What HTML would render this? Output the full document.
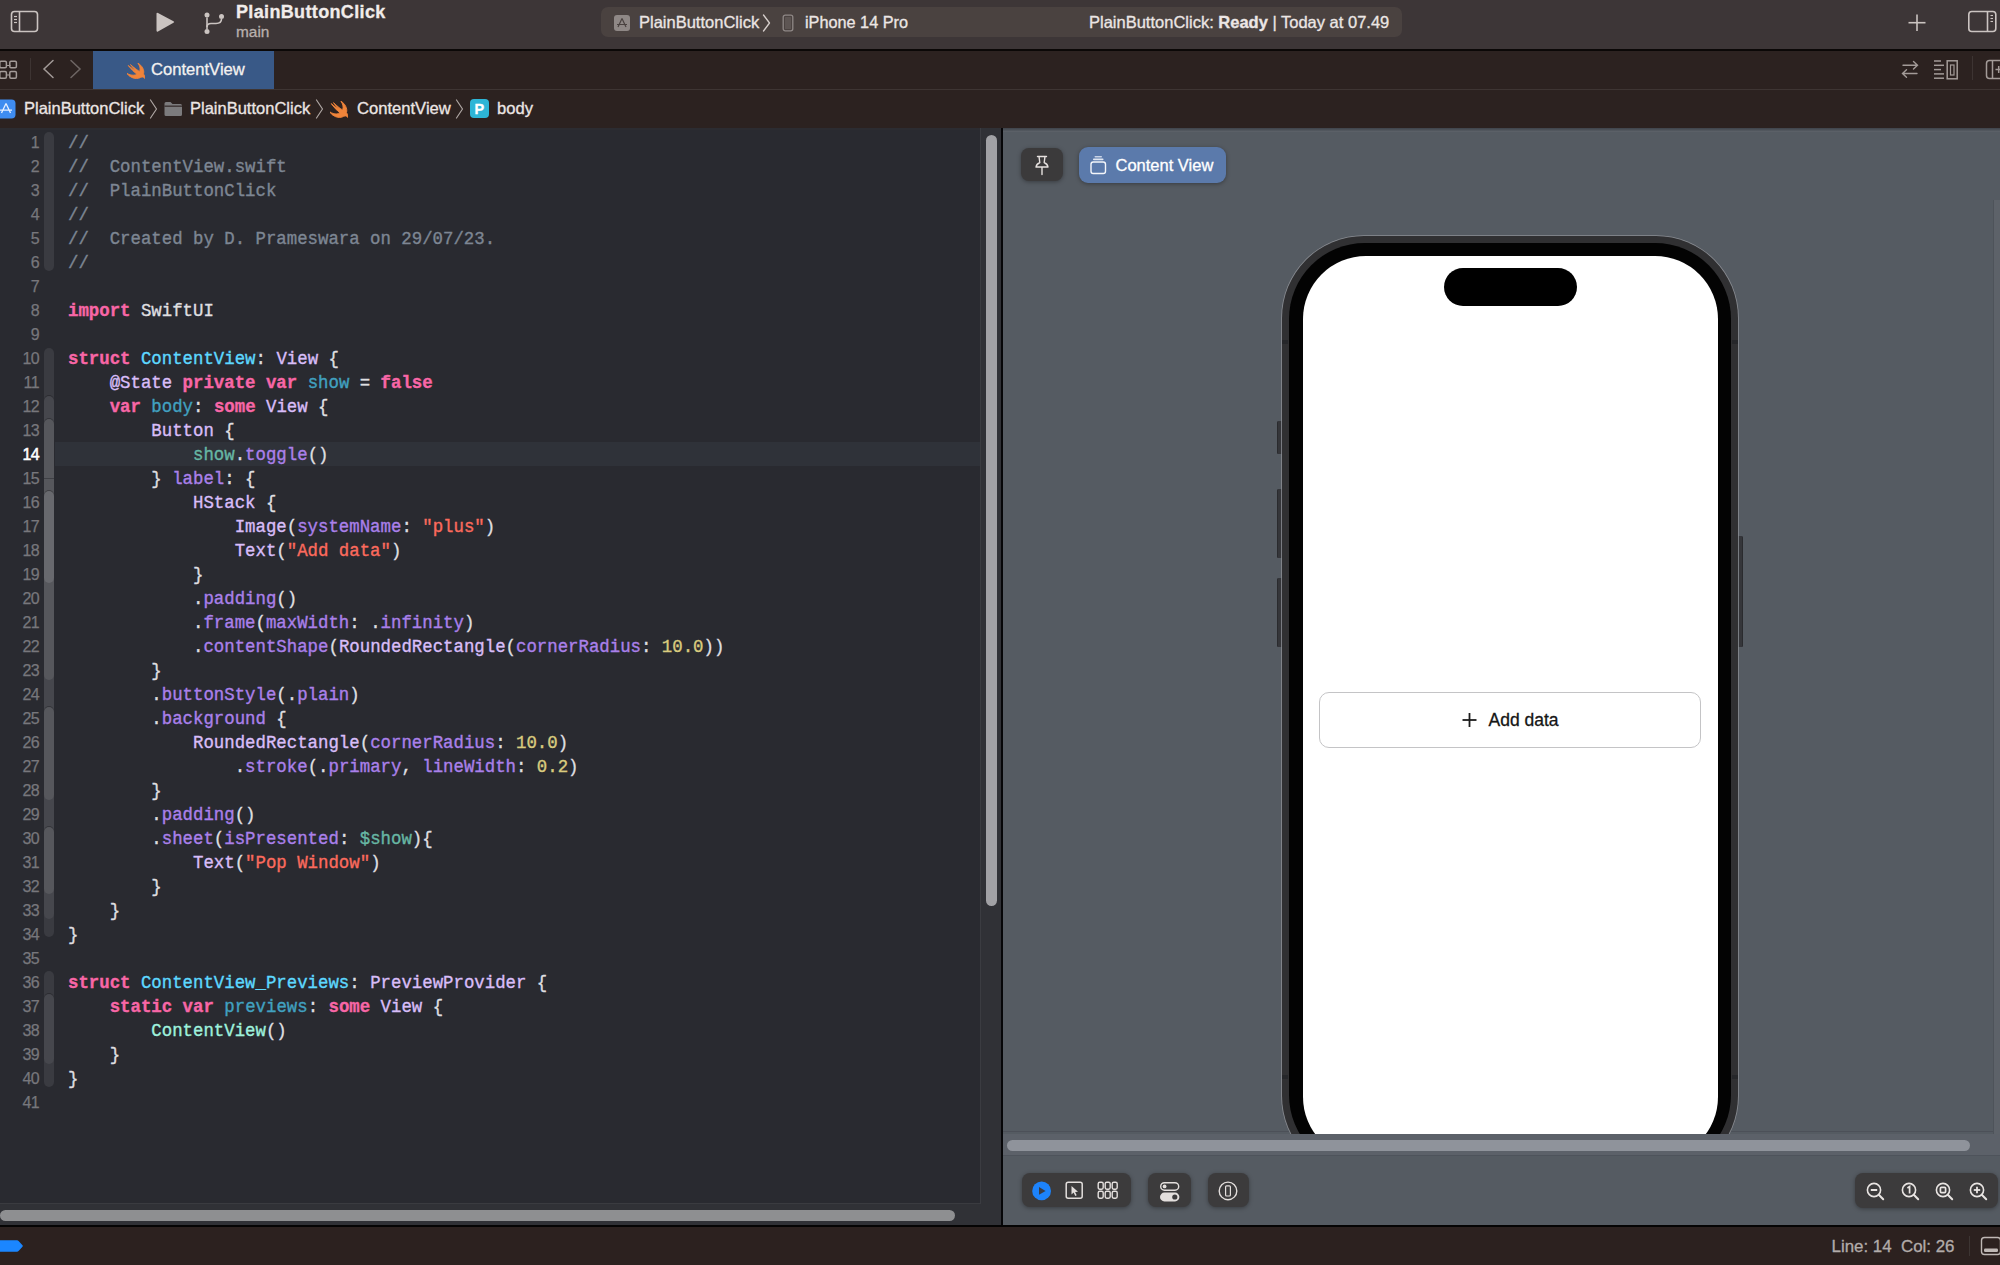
<!DOCTYPE html>
<html><head><meta charset="utf-8">
<style>
*{margin:0;padding:0;box-sizing:border-box}
html,body{width:2000px;height:1265px;overflow:hidden;background:#2c2220;font-family:"Liberation Sans",sans-serif}
.a{position:absolute}
#toolbar{left:0;top:0;width:2000px;height:49px;background:#3d3637}
#tbline{left:0;top:49px;width:2000px;height:2px;background:#0b0807}
#tabbar{left:0;top:51px;width:2000px;height:38px;background:#2c2220}
#tabsep{left:0;top:89px;width:2000px;height:1px;background:#3e3533}
#crumb{left:0;top:90px;width:2000px;height:38px;background:#2c2220}
#editor{left:0;top:128px;width:1001px;height:1098px;background:#292a30;overflow:hidden}
#divider{left:1001px;top:128px;width:2px;height:1098px;background:#060608}
#canvas{left:1003px;top:128px;width:997px;height:1098px;background:#555b62;overflow:hidden}
#statline{left:0;top:1225px;width:2000px;height:2px;background:#050404}
#status{left:0;top:1227px;width:2000px;height:38px;background:#2c211f}
.ui{color:#ece6e4;font-size:16.5px;white-space:pre;line-height:20px}
.code{font-family:"Liberation Mono",monospace;font-size:17.38px;line-height:24px;white-space:pre;color:#dfdfe0;transform-origin:0 16.6px;transform:scaleY(1.05);-webkit-text-stroke:0.35px currentColor}
.ln{font-family:"Liberation Sans",sans-serif;font-size:16px;color:#77777c;text-align:right;width:40px;line-height:24px;letter-spacing:-0.6px;-webkit-text-stroke:0.25px #77777c}
.k{color:#f866a6;font-weight:bold}
.c{color:#7d8693}
.td{color:#5dd8ff}
.od{color:#41a1c0}
.st{color:#d8bdf8}
.sf{color:#aa80ea}
.pp{color:#67b7a4}
.pt{color:#9ef1dd}
.s{color:#fc6a5d}
.n{color:#d9cb7e}
</style></head><body>
<body>
<div id="toolbar" class="a"></div><div id="tbline" class="a"></div><div id="tabbar" class="a"></div><div id="tabsep" class="a"></div><div id="crumb" class="a"></div>
<svg class="a" style="left:10px;top:10px;" width="30" height="24" viewBox="0 0 30 24"><rect x="1.5" y="1.5" width="26" height="20" rx="3" fill="none" stroke="#cbc4c1" stroke-width="1.6"/><line x1="9.5" y1="2" x2="9.5" y2="21" stroke="#cbc4c1" stroke-width="1.6"/><line x1="4" y1="6.5" x2="7" y2="6.5" stroke="#cbc4c1" stroke-width="1.2"/><line x1="4" y1="9.5" x2="7" y2="9.5" stroke="#cbc4c1" stroke-width="1.2"/><line x1="4" y1="12.5" x2="7" y2="12.5" stroke="#cbc4c1" stroke-width="1.2"/></svg>
<svg class="a" style="left:154px;top:11px;" width="24" height="24" viewBox="0 0 24 24"><path d="M2.5 2.8 Q2.5 1.2 4 2 L19.5 10.2 Q21 11 19.5 11.8 L4 20.4 Q2.5 21.2 2.5 19.6 Z" fill="#cbc4c1"/></svg>
<svg class="a" style="left:202px;top:11px;" width="26" height="26" viewBox="0 0 26 26"><circle cx="5" cy="4" r="2.5" fill="#cbc4c1"/><circle cx="5" cy="20.5" r="2.5" fill="#cbc4c1"/><circle cx="19.5" cy="5.5" r="2.5" fill="#cbc4c1"/><line x1="5" y1="6.6" x2="5" y2="17.9" stroke="#cbc4c1" stroke-width="1.6"/><path d="M19.5 8.1 Q19.5 12.5 14 12.5 L9 12.5 Q5 12.5 5 16" fill="none" stroke="#cbc4c1" stroke-width="1.6"/></svg>
<div class="a" style="left:236px;top:2.76px;font-family:'Liberation Sans';font-size:18px;line-height:18px;font-weight:700;color:#f1ecea;white-space:pre;-webkit-text-stroke:0.3px #f1ecea;letter-spacing:0.35px;">PlainButtonClick</div>
<div class="a" style="left:236px;top:24.46px;font-family:'Liberation Sans';font-size:15.4px;line-height:15.4px;font-weight:400;color:#b8b0ad;white-space:pre;-webkit-text-stroke:0.3px #b8b0ad;">main</div>
<div class="a" style="left:601px;top:7px;width:801px;height:30px;background:#4a4240;border-radius:7px;"></div>
<div class="a" style="left:614px;top:15px;width:16px;height:16px;background:#8f8886;border-radius:3px;"></div>
<svg class="a" style="left:614px;top:15px;" width="16" height="16" viewBox="0 0 16 16"><path d="M8 3.5 L4 12 M8 3.5 L12 12 M3 9.5 L13 9.5" stroke="#4a4240" stroke-width="1.2" fill="none"/></svg>
<div class="a" style="left:639px;top:14.03px;font-family:'Liberation Sans';font-size:16.5px;line-height:16.5px;font-weight:400;color:#ece6e4;white-space:pre;-webkit-text-stroke:0.3px #ece6e4;">PlainButtonClick</div>
<svg class="a" style="left:762px;top:14px;" width="9" height="18" viewBox="0 0 9 18"><path d="M1.5 1 L7.5 9.0 L1.5 17" fill="none" stroke="#d6cfcc" stroke-width="1.3" stroke-linecap="round" stroke-linejoin="round"/></svg>
<svg class="a" style="left:782px;top:14px;" width="12" height="18" viewBox="0 0 12 18"><rect x="1.2" y="1.2" width="9.6" height="15.6" rx="2" fill="none" stroke="#8f8886" stroke-width="1.3"/><rect x="3" y="3" width="6" height="12" rx="0.5" fill="#5d5553"/></svg>
<div class="a" style="left:805px;top:14.24px;font-family:'Liberation Sans';font-size:16.25px;line-height:16.25px;font-weight:400;color:#ece6e4;white-space:pre;-webkit-text-stroke:0.3px #ece6e4;">iPhone 14 Pro</div>
<div class="a" style="left:1089px;top:14.03px;font-family:'Liberation Sans';font-size:16.5px;line-height:16.5px;font-weight:400;color:#ece6e4;white-space:pre;-webkit-text-stroke:0.3px #ece6e4;">PlainButtonClick: <b>Ready</b> | Today at 07.49</div>
<svg class="a" style="left:1906px;top:12px;" width="22" height="22" viewBox="0 0 22 22"><line x1="11" y1="2.5" x2="11" y2="19" stroke="#cbc4c1" stroke-width="1.6"/><line x1="2.5" y1="10.7" x2="19.5" y2="10.7" stroke="#cbc4c1" stroke-width="1.6"/></svg>
<svg class="a" style="left:1967px;top:10px;" width="32" height="24" viewBox="0 0 32 24"><rect x="1.8" y="1.5" width="27" height="20" rx="3" fill="none" stroke="#cbc4c1" stroke-width="1.6"/><line x1="20.5" y1="2" x2="20.5" y2="21" stroke="#cbc4c1" stroke-width="1.6"/><line x1="23.5" y1="5.5" x2="26" y2="5.5" stroke="#cbc4c1" stroke-width="1.1"/><line x1="23.5" y1="8.5" x2="26" y2="8.5" stroke="#cbc4c1" stroke-width="1.1"/><line x1="23.5" y1="11.5" x2="26" y2="11.5" stroke="#cbc4c1" stroke-width="1.1"/></svg>
<svg class="a" style="left:-2px;top:58px;" width="22" height="24" viewBox="0 0 22 24"><rect x="1.8" y="3.2" width="6.6" height="6.6" rx="1.2" fill="none" stroke="#a39b98" stroke-width="1.5"/><rect x="11.8" y="3.2" width="6.6" height="6.6" rx="1.2" fill="none" stroke="#a39b98" stroke-width="1.5"/><rect x="1.8" y="13.6" width="6.6" height="6.6" rx="1.2" fill="none" stroke="#a39b98" stroke-width="1.5"/><rect x="11.8" y="13.6" width="6.6" height="6.6" rx="1.2" fill="none" stroke="#a39b98" stroke-width="1.5"/><line x1="8.4" y1="7.5" x2="12.5" y2="7.5" stroke="#a39b98" stroke-width="1"/><line x1="8.4" y1="17" x2="12" y2="17" stroke="#a39b98" stroke-width="1"/></svg>
<div class="a" style="left:30px;top:58px;width:1px;height:22px;background:#3d3432;border-radius:0px;"></div>
<svg class="a" style="left:40px;top:58px;" width="18" height="24" viewBox="0 0 18 24"><path d="M13 2.5 L4 11 L13 19.5" fill="none" stroke="#a39b98" stroke-width="1.5" stroke-linecap="round"/></svg>
<svg class="a" style="left:66px;top:58px;" width="18" height="24" viewBox="0 0 18 24"><path d="M5 2.5 L14 11 L5 19.5" fill="none" stroke="#6e6664" stroke-width="1.5" stroke-linecap="round"/></svg>
<div class="a" style="left:93px;top:51px;width:181px;height:38px;background:#395987;border-radius:0px;"></div>
<svg class="a" style="left:126.5px;top:62.5px;" width="18" height="16" viewBox="2.9 3.2 17.6 16.9" preserveAspectRatio="none"><path d="M13.543 3.41c4.114 2.47 6.545 7.162 5.549 11.131-.024.093-.05.181-.076.272l.002.001c2.062 2.538 1.5 5.258 1.236 4.745-1.072-2.086-3.066-1.568-4.088-1.043a6.803 6.803 0 0 1-.281.158l-.02.012-.002.002c-2.115 1.123-4.957 1.205-7.812-.022a12.568 12.568 0 0 1-5.64-4.838c.649.48 1.35.902 2.097 1.252 3.019 1.414 6.051 1.311 8.197-.002C9.651 12.73 7.101 9.670 5.146 7.191a10.628 10.628 0 0 1-1.005-1.384c2.34 2.142 6.038 4.83 7.365 5.576C8.690 8.408 6.208 4.743 6.324 4.860c4.436 4.470 8.528 6.996 8.528 6.996.154.085.27.154.36.213.085-.215.16-.437.224-.668.708-2.588-.09-5.548-1.893-7.992z" fill="#f0843a" stroke="#f0843a" stroke-width="0.9" stroke-linejoin="round"/></svg>
<div class="a" style="left:151px;top:62.45px;font-family:'Liberation Sans';font-size:16.6px;line-height:16.6px;font-weight:400;color:#f3f1f0;white-space:pre;-webkit-text-stroke:0.3px #f3f1f0;">ContentView</div>
<svg class="a" style="left:1899px;top:58px;" width="22" height="24" viewBox="0 0 22 24"><path d="M4 7.3 L18 7.3 M14.5 3.5 L18.5 7.3 L14.5 11.1" fill="none" stroke="#a39b98" stroke-width="1.4" stroke-linecap="round"/><path d="M18 15.5 L4 15.5 M7.5 11.7 L3.5 15.5 L7.5 19.3" fill="none" stroke="#a39b98" stroke-width="1.4" stroke-linecap="round"/></svg>
<svg class="a" style="left:1932px;top:58px;" width="30" height="24" viewBox="0 0 30 24"><line x1="2" y1="3" x2="9" y2="3" stroke="#a39b98" stroke-width="1.5"/><line x1="2" y1="7.3" x2="12" y2="7.3" stroke="#a39b98" stroke-width="1.5"/><line x1="2" y1="11.6" x2="9" y2="11.6" stroke="#a39b98" stroke-width="1.5"/><line x1="2" y1="15.9" x2="12" y2="15.9" stroke="#a39b98" stroke-width="1.5"/><line x1="2" y1="20.2" x2="12" y2="20.2" stroke="#a39b98" stroke-width="1.5"/><rect x="15.2" y="2.8" width="10" height="18" fill="none" stroke="#a39b98" stroke-width="1.5"/><rect x="18.5" y="7" width="3.5" height="10" fill="none" stroke="#a39b98" stroke-width="1.2"/></svg>
<div class="a" style="left:1972px;top:56px;width:1px;height:24px;background:#3d3432;border-radius:0px;"></div>
<svg class="a" style="left:1985px;top:58px;" width="20" height="24" viewBox="0 0 20 24"><rect x="1.5" y="2.5" width="20" height="18" rx="3" fill="none" stroke="#a39b98" stroke-width="1.5"/><line x1="7.5" y1="3" x2="7.5" y2="20" stroke="#a39b98" stroke-width="1.5"/><line x1="10.5" y1="11.5" x2="17" y2="11.5" stroke="#a39b98" stroke-width="1.5"/><line x1="13.7" y1="8" x2="13.7" y2="15" stroke="#a39b98" stroke-width="1.5"/></svg>
<svg class="a" style="left:-4px;top:99px;" width="21" height="20" viewBox="0 0 21 20"><rect x="0.5" y="0.5" width="19" height="19" rx="4" fill="#3f8cf0"/><path d="M10 4.5 L5.5 14 M10 4.5 L14.5 14 M4 11.2 L16 11.2" stroke="#e8f0ff" stroke-width="1.3" fill="none"/></svg>
<div class="a" style="left:24px;top:100.33px;font-family:'Liberation Sans';font-size:16.5px;line-height:16.5px;font-weight:400;color:#ece6e4;white-space:pre;-webkit-text-stroke:0.3px #ece6e4;">PlainButtonClick</div>
<svg class="a" style="left:149px;top:99px;" width="9" height="20" viewBox="0 0 9 20"><path d="M1.5 1 L7.5 10.0 L1.5 19" fill="none" stroke="#aea6a3" stroke-width="1.2" stroke-linecap="round" stroke-linejoin="round"/></svg>
<svg class="a" style="left:164px;top:101px;" width="19" height="16" viewBox="0 0 19 16"><path d="M0.5 2.5 Q0.5 1 2 1 L6.5 1 L8.5 3 L16.5 3 Q18 3 18 4.5 L18 13.5 Q18 15 16.5 15 L2 15 Q0.5 15 0.5 13.5 Z" fill="#7c7b7d"/><rect x="0.5" y="4.6" width="17.5" height="1.1" fill="#2c2220"/></svg>
<div class="a" style="left:190px;top:100.33px;font-family:'Liberation Sans';font-size:16.5px;line-height:16.5px;font-weight:400;color:#ece6e4;white-space:pre;-webkit-text-stroke:0.3px #ece6e4;">PlainButtonClick</div>
<svg class="a" style="left:315px;top:99px;" width="9" height="20" viewBox="0 0 9 20"><path d="M1.5 1 L7.5 10.0 L1.5 19" fill="none" stroke="#aea6a3" stroke-width="1.2" stroke-linecap="round" stroke-linejoin="round"/></svg>
<svg class="a" style="left:330px;top:101px;" width="18" height="17" viewBox="2.9 3.2 17.6 16.9" preserveAspectRatio="none"><path d="M13.543 3.41c4.114 2.47 6.545 7.162 5.549 11.131-.024.093-.05.181-.076.272l.002.001c2.062 2.538 1.5 5.258 1.236 4.745-1.072-2.086-3.066-1.568-4.088-1.043a6.803 6.803 0 0 1-.281.158l-.02.012-.002.002c-2.115 1.123-4.957 1.205-7.812-.022a12.568 12.568 0 0 1-5.64-4.838c.649.48 1.35.902 2.097 1.252 3.019 1.414 6.051 1.311 8.197-.002C9.651 12.73 7.101 9.670 5.146 7.191a10.628 10.628 0 0 1-1.005-1.384c2.34 2.142 6.038 4.83 7.365 5.576C8.690 8.408 6.208 4.743 6.324 4.860c4.436 4.470 8.528 6.996 8.528 6.996.154.085.27.154.36.213.085-.215.16-.437.224-.668.708-2.588-.09-5.548-1.893-7.992z" fill="#f0843a" stroke="#f0843a" stroke-width="0.9" stroke-linejoin="round"/></svg>
<div class="a" style="left:357px;top:101.25px;font-family:'Liberation Sans';font-size:16.6px;line-height:16.6px;font-weight:400;color:#ece6e4;white-space:pre;-webkit-text-stroke:0.3px #ece6e4;">ContentView</div>
<svg class="a" style="left:455px;top:99px;" width="9" height="20" viewBox="0 0 9 20"><path d="M1.5 1 L7.5 10.0 L1.5 19" fill="none" stroke="#aea6a3" stroke-width="1.2" stroke-linecap="round" stroke-linejoin="round"/></svg>
<div class="a" style="left:470px;top:99px;width:19px;height:19px;background:#2db5d6;border-radius:4px;"></div>
<div class="a" style="left:474.5px;top:102.03px;font-family:'Liberation Sans';font-size:14.5px;line-height:14.5px;font-weight:700;color:#ffffff;white-space:pre;-webkit-text-stroke:0.3px #ffffff;">P</div>
<div class="a" style="left:497px;top:101.45px;font-family:'Liberation Sans';font-size:16.6px;line-height:16.6px;font-weight:400;color:#ece6e4;white-space:pre;-webkit-text-stroke:0.3px #ece6e4;">body</div>
<div id="editor" class="a">
<div class="a" style="left:55px;top:314px;width:925px;height:24px;background:#2f3239"></div>
<div class="a" style="left:44px;top:3.5px;width:10px;height:139.5px;background:#3a3b41;border-radius:5px;z-index:1;"></div>
<div class="a" style="left:44px;top:219.5px;width:10px;height:589.5px;background:#3a3b41;border-radius:5px;z-index:1;"></div>
<div class="a" style="left:44px;top:267.5px;width:10px;height:523.5px;background:#46474d;border-radius:5px;z-index:2;box-shadow:0 -1px 0 rgba(20,20,24,0.35)"></div>
<div class="a" style="left:44px;top:290.5px;width:10px;height:59.5px;background:#56575c;border-radius:5px;z-index:3;box-shadow:0 -1px 0 rgba(20,20,24,0.35);border-radius:5px 5px 0 0"></div>
<div class="a" style="left:44px;top:350px;width:10px;height:202px;background:#56575c;border-radius:5px;z-index:3;border-radius:0 0 5px 5px"></div>
<div class="a" style="left:44px;top:362.5px;width:10px;height:92.5px;background:#68696e;border-radius:5px;z-index:4;box-shadow:0 -1px 0 rgba(20,20,24,0.35)"></div>
<div class="a" style="left:44px;top:578.5px;width:10px;height:93.5px;background:#56575c;border-radius:5px;z-index:3;box-shadow:0 -1px 0 rgba(20,20,24,0.35)"></div>
<div class="a" style="left:44px;top:698.5px;width:10px;height:67.5px;background:#56575c;border-radius:5px;z-index:3;box-shadow:0 -1px 0 rgba(20,20,24,0.35)"></div>
<div class="a" style="left:44px;top:842.5px;width:10px;height:116.5px;background:#3a3b41;border-radius:5px;z-index:1;"></div>
<div class="a" style="left:44px;top:865.5px;width:10px;height:70.5px;background:#46474d;border-radius:5px;z-index:2;box-shadow:0 -1px 0 rgba(20,20,24,0.35)"></div>
<div class="a" style="left:44px;top:350px;width:10px;height:1px;background:#3f4045;z-index:5"></div>
<div class="a ln" style="left:-1px;top:2.5px;">1</div>
<div class="a code" style="left:68px;top:3.5px"><span class="c">//</span></div>
<div class="a ln" style="left:-1px;top:26.5px;">2</div>
<div class="a code" style="left:68px;top:27.5px"><span class="c">//  ContentView.swift</span></div>
<div class="a ln" style="left:-1px;top:50.5px;">3</div>
<div class="a code" style="left:68px;top:51.5px"><span class="c">//  PlainButtonClick</span></div>
<div class="a ln" style="left:-1px;top:74.5px;">4</div>
<div class="a code" style="left:68px;top:75.5px"><span class="c">//</span></div>
<div class="a ln" style="left:-1px;top:98.5px;">5</div>
<div class="a code" style="left:68px;top:99.5px"><span class="c">//  Created by D. Prameswara on 29/07/23.</span></div>
<div class="a ln" style="left:-1px;top:122.5px;">6</div>
<div class="a code" style="left:68px;top:123.5px"><span class="c">//</span></div>
<div class="a ln" style="left:-1px;top:146.5px;">7</div>
<div class="a code" style="left:68px;top:147.5px"></div>
<div class="a ln" style="left:-1px;top:170.5px;">8</div>
<div class="a code" style="left:68px;top:171.5px"><span class="k">import</span> SwiftUI</div>
<div class="a ln" style="left:-1px;top:194.5px;">9</div>
<div class="a code" style="left:68px;top:195.5px"></div>
<div class="a ln" style="left:-1px;top:218.5px;">10</div>
<div class="a code" style="left:68px;top:219.5px"><span class="k">struct</span> <span class="td">ContentView</span>: <span class="st">View</span> {</div>
<div class="a ln" style="left:-1px;top:242.5px;">11</div>
<div class="a code" style="left:68px;top:243.5px">    <span class="st">@State</span> <span class="k">private</span> <span class="k">var</span> <span class="od">show</span> = <span class="k">false</span></div>
<div class="a ln" style="left:-1px;top:266.5px;">12</div>
<div class="a code" style="left:68px;top:267.5px">    <span class="k">var</span> <span class="od">body</span>: <span class="k">some</span> <span class="st">View</span> {</div>
<div class="a ln" style="left:-1px;top:290.5px;">13</div>
<div class="a code" style="left:68px;top:291.5px">        <span class="st">Button</span> {</div>
<div class="a ln" style="left:-1px;top:314.5px;color:#ffffff;-webkit-text-stroke:0.5px #ffffff">14</div>
<div class="a code" style="left:68px;top:315.5px">            <span class="pp">show</span>.<span class="sf">toggle</span>()</div>
<div class="a ln" style="left:-1px;top:338.5px;">15</div>
<div class="a code" style="left:68px;top:339.5px">        } <span class="sf">label</span>: {</div>
<div class="a ln" style="left:-1px;top:362.5px;">16</div>
<div class="a code" style="left:68px;top:363.5px">            <span class="st">HStack</span> {</div>
<div class="a ln" style="left:-1px;top:386.5px;">17</div>
<div class="a code" style="left:68px;top:387.5px">                <span class="st">Image</span>(<span class="sf">systemName</span>: <span class="s">"plus"</span>)</div>
<div class="a ln" style="left:-1px;top:410.5px;">18</div>
<div class="a code" style="left:68px;top:411.5px">                <span class="st">Text</span>(<span class="s">"Add data"</span>)</div>
<div class="a ln" style="left:-1px;top:434.5px;">19</div>
<div class="a code" style="left:68px;top:435.5px">            }</div>
<div class="a ln" style="left:-1px;top:458.5px;">20</div>
<div class="a code" style="left:68px;top:459.5px">            .<span class="sf">padding</span>()</div>
<div class="a ln" style="left:-1px;top:482.5px;">21</div>
<div class="a code" style="left:68px;top:483.5px">            .<span class="sf">frame</span>(<span class="sf">maxWidth</span>: .<span class="sf">infinity</span>)</div>
<div class="a ln" style="left:-1px;top:506.5px;">22</div>
<div class="a code" style="left:68px;top:507.5px">            .<span class="sf">contentShape</span>(<span class="st">RoundedRectangle</span>(<span class="sf">cornerRadius</span>: <span class="n">10.0</span>))</div>
<div class="a ln" style="left:-1px;top:530.5px;">23</div>
<div class="a code" style="left:68px;top:531.5px">        }</div>
<div class="a ln" style="left:-1px;top:554.5px;">24</div>
<div class="a code" style="left:68px;top:555.5px">        .<span class="sf">buttonStyle</span>(.<span class="sf">plain</span>)</div>
<div class="a ln" style="left:-1px;top:578.5px;">25</div>
<div class="a code" style="left:68px;top:579.5px">        .<span class="sf">background</span> {</div>
<div class="a ln" style="left:-1px;top:602.5px;">26</div>
<div class="a code" style="left:68px;top:603.5px">            <span class="st">RoundedRectangle</span>(<span class="sf">cornerRadius</span>: <span class="n">10.0</span>)</div>
<div class="a ln" style="left:-1px;top:626.5px;">27</div>
<div class="a code" style="left:68px;top:627.5px">                .<span class="sf">stroke</span>(.<span class="sf">primary</span>, <span class="sf">lineWidth</span>: <span class="n">0.2</span>)</div>
<div class="a ln" style="left:-1px;top:650.5px;">28</div>
<div class="a code" style="left:68px;top:651.5px">        }</div>
<div class="a ln" style="left:-1px;top:674.5px;">29</div>
<div class="a code" style="left:68px;top:675.5px">        .<span class="sf">padding</span>()</div>
<div class="a ln" style="left:-1px;top:698.5px;">30</div>
<div class="a code" style="left:68px;top:699.5px">        .<span class="sf">sheet</span>(<span class="sf">isPresented</span>: <span class="pp">$show</span>){</div>
<div class="a ln" style="left:-1px;top:722.5px;">31</div>
<div class="a code" style="left:68px;top:723.5px">            <span class="st">Text</span>(<span class="s">"Pop Window"</span>)</div>
<div class="a ln" style="left:-1px;top:746.5px;">32</div>
<div class="a code" style="left:68px;top:747.5px">        }</div>
<div class="a ln" style="left:-1px;top:770.5px;">33</div>
<div class="a code" style="left:68px;top:771.5px">    }</div>
<div class="a ln" style="left:-1px;top:794.5px;">34</div>
<div class="a code" style="left:68px;top:795.5px">}</div>
<div class="a ln" style="left:-1px;top:818.5px;">35</div>
<div class="a code" style="left:68px;top:819.5px"></div>
<div class="a ln" style="left:-1px;top:842.5px;">36</div>
<div class="a code" style="left:68px;top:843.5px"><span class="k">struct</span> <span class="td">ContentView_Previews</span>: <span class="st">PreviewProvider</span> {</div>
<div class="a ln" style="left:-1px;top:866.5px;">37</div>
<div class="a code" style="left:68px;top:867.5px">    <span class="k">static</span> <span class="k">var</span> <span class="od">previews</span>: <span class="k">some</span> <span class="st">View</span> {</div>
<div class="a ln" style="left:-1px;top:890.5px;">38</div>
<div class="a code" style="left:68px;top:891.5px">        <span class="pt">ContentView</span>()</div>
<div class="a ln" style="left:-1px;top:914.5px;">39</div>
<div class="a code" style="left:68px;top:915.5px">    }</div>
<div class="a ln" style="left:-1px;top:938.5px;">40</div>
<div class="a code" style="left:68px;top:939.5px">}</div>
<div class="a ln" style="left:-1px;top:962.5px;">41</div>
<div class="a code" style="left:68px;top:963.5px"></div><div class="a" style="left:0px;top:0px;width:980px;height:2px;background:#2c2c31;border-radius:0px;"></div>
<div class="a" style="left:980px;top:0px;width:21px;height:1076px;background:#303136;border-radius:px;border-left:1px solid #3b3c41;box-sizing:border-box"></div>
<div class="a" style="left:986px;top:6.699999999999989px;width:11px;height:771.3px;background:#a1a1a5;border-radius:5.5px;"></div>
<div class="a" style="left:0px;top:1075px;width:980px;height:1px;background:#3a3b40;border-radius:0px;"></div>
<div class="a" style="left:0px;top:1076px;width:1001px;height:22px;background:#303136;border-radius:0px;"></div>
<div class="a" style="left:0px;top:1081.5px;width:954.5px;height:11.5px;background:#8e8f91;border-radius:5.75px;"></div></div>
<div id="divider" class="a"></div>
<div id="canvas" class="a">
<div class="a" style="left:0px;top:0px;width:997px;height:3px;background:linear-gradient(#3f434a,#555b62);border-radius:0px;"></div>
<div class="a" style="left:0px;top:3px;width:997px;height:1px;background:#5b6067;border-radius:0px;"></div>
<div class="a" style="left:18px;top:20px;width:42px;height:33px;background:#3b3a3b;border-radius:8px;box-shadow:0 1px 4px rgba(0,0,0,0.35)"></div>
<svg class="a" style="left:28px;top:26px;" width="22" height="22" viewBox="0 0 22 22"><path d="M6.5 2.5 L15.5 2.5 M8 2.5 L8.8 8.5 Q5.5 10 5 13 L17 13 Q16.5 10 13.2 8.5 L14 2.5 M11 13 L11 20.5" fill="none" stroke="#e6e1df" stroke-width="1.4" stroke-linejoin="round" stroke-linecap="round"/></svg>
<div class="a" style="left:75.5px;top:19px;width:147px;height:36px;background:#5b7aab;border-radius:9px;box-shadow:0 1px 4px rgba(0,0,0,0.35)"></div>
<svg class="a" style="left:85px;top:26px;" width="22" height="22" viewBox="0 0 22 22"><rect x="3" y="8" width="14.5" height="11.5" rx="2.2" fill="none" stroke="#f4f6fa" stroke-width="1.4"/><rect x="5" y="4.6" width="10.5" height="1.6" rx="0.8" fill="#dfe6f2"/><rect x="6.5" y="2" width="7.5" height="1.5" rx="0.7" fill="#c9d3e6"/></svg>
<div class="a" style="left:112.5px;top:28.83px;font-family:'Liberation Sans';font-size:16.5px;line-height:16.5px;font-weight:400;color:#ffffff;white-space:pre;-webkit-text-stroke:0.3px #ffffff;">Content View</div>
<div class="a" style="left:0px;top:1002.5px;width:997px;height:1px;background:#4c5058;border-radius:0px;"></div>
<div class="a" style="left:990px;top:72px;width:1px;height:934px;background:#4e535a;border-radius:0px;"></div>
<div class="a" style="left:991px;top:72px;width:6px;height:934px;background:#5d6269;border-radius:0px;"></div>
<div class="a" style="left:273.5px;top:293px;width:6.5px;height:33px;background:#35363a;border-radius:1.5px;border-left:1px solid #2a2b2e"></div>
<div class="a" style="left:273.5px;top:360.5px;width:6.5px;height:69.5px;background:#35363a;border-radius:1.5px;border-left:1px solid #2a2b2e"></div>
<div class="a" style="left:273.5px;top:450px;width:6.5px;height:69px;background:#35363a;border-radius:1.5px;border-left:1px solid #2a2b2e"></div>
<div class="a" style="left:734px;top:408px;width:6px;height:111px;background:#35363a;border-radius:1.5px;border-right:1px solid #2a2b2e"></div>
<div class="a" style="left:279px;top:108px;width:456px;height:942px;background:#303032;border-radius:82px;box-shadow:0 0 0 0.8px #8b8e94"></div>
<div class="a" style="left:286px;top:115px;width:442px;height:928px;background:#030303;border-radius:76px;"></div>
<div class="a" style="left:300px;top:128px;width:415px;height:904px;background:#ffffff;border-radius:63px;"></div>
<div class="a" style="left:279px;top:212px;width:6px;height:4px;background:#26272a;border-radius:0px;"></div>
<div class="a" style="left:729px;top:212px;width:6px;height:4px;background:#26272a;border-radius:0px;"></div>
<div class="a" style="left:279px;top:947px;width:6px;height:4px;background:#26272a;border-radius:0px;"></div>
<div class="a" style="left:729px;top:947px;width:6px;height:4px;background:#26272a;border-radius:0px;"></div>
<div class="a" style="left:440.5px;top:139.5px;width:133px;height:38.5px;background:#000000;border-radius:19.25px;"></div>
<div class="a" style="left:316px;top:564px;width:382px;height:56px;background:transparent;border-radius:10px;border:1px solid #c4c4c6;box-sizing:border-box"></div>
<svg class="a" style="left:457px;top:582px;" width="20" height="20" viewBox="0 0 20 20"><line x1="9.5" y1="3" x2="9.5" y2="17" stroke="#1b1b1b" stroke-width="1.8"/><line x1="2.5" y1="10" x2="16.5" y2="10" stroke="#1b1b1b" stroke-width="1.8"/></svg>
<div class="a" style="left:485.5px;top:584.19px;font-family:'Liberation Sans';font-size:17.5px;line-height:17.5px;font-weight:400;color:#151515;white-space:pre;-webkit-text-stroke:0.3px #151515;">Add data</div>
<div class="a" style="left:0px;top:1005.5px;width:997px;height:95px;background:#555b62;border-radius:0px;"></div>
<div class="a" style="left:0px;top:1005.5px;width:997px;height:21px;background:#5c6169;border-radius:0px;"></div>
<div class="a" style="left:4px;top:1011.5px;width:963px;height:11.5px;background:#8f939b;border-radius:6px;"></div>
<div class="a" style="left:0px;top:1026.5px;width:997px;height:1px;background:#4e535b;border-radius:0px;"></div>
<div class="a" style="left:18.5px;top:1045px;width:109.5px;height:34px;background:#3c3b3c;border-radius:8px;box-shadow:0 1px 4px rgba(0,0,0,0.35)"></div>
<div class="a" style="left:145px;top:1045px;width:42.5px;height:34px;background:#3c3b3c;border-radius:8px;box-shadow:0 1px 4px rgba(0,0,0,0.35)"></div>
<div class="a" style="left:204.5px;top:1045px;width:41.5px;height:34px;background:#3c3b3c;border-radius:8px;box-shadow:0 1px 4px rgba(0,0,0,0.35)"></div>
<div class="a" style="left:851.5px;top:1045px;width:143.5px;height:34.5px;background:#3c3b3c;border-radius:8px;box-shadow:0 1px 4px rgba(0,0,0,0.35)"></div>
<svg class="a" style="left:28px;top:1052px;" width="22" height="22" viewBox="0 0 22 22"><circle cx="10.6" cy="10.9" r="9.4" fill="#1d83fb"/><path d="M8 7 L14.6 10.9 L8 14.8 Z" fill="#3a3c45"/></svg>
<svg class="a" style="left:61px;top:1052px;" width="22" height="22" viewBox="0 0 22 22"><rect x="2.2" y="2.2" width="16" height="16" rx="2" fill="none" stroke="#e3dfdd" stroke-width="1.5"/><path d="M7.5 6 L7.5 14.5 L9.6 12.6 L11.3 16 L12.7 15.3 L11.1 12 L14 11.8 Z" fill="#e3dfdd"/></svg>
<svg class="a" style="left:94px;top:1052px;" width="22" height="22" viewBox="0 0 22 22"><rect x="1.2" y="2.2" width="5" height="7" rx="1.6" fill="none" stroke="#e3dfdd" stroke-width="1.4"/><rect x="1.2" y="11.2" width="5" height="7" rx="1.6" fill="none" stroke="#e3dfdd" stroke-width="1.4"/><rect x="8.2" y="2.2" width="5" height="7" rx="1.6" fill="none" stroke="#e3dfdd" stroke-width="1.4"/><rect x="8.2" y="11.2" width="5" height="7" rx="1.6" fill="none" stroke="#e3dfdd" stroke-width="1.4"/><rect x="15.2" y="2.2" width="5" height="7" rx="1.6" fill="none" stroke="#e3dfdd" stroke-width="1.4"/><rect x="15.2" y="11.2" width="5" height="7" rx="1.6" fill="none" stroke="#e3dfdd" stroke-width="1.4"/></svg>
<svg class="a" style="left:156px;top:1053px;" width="22" height="22" viewBox="0 0 22 22"><rect x="1.7" y="1.7" width="18" height="7.5" rx="3.75" fill="none" stroke="#e3dfdd" stroke-width="1.4"/><circle cx="5.6" cy="5.45" r="1.9" fill="#e3dfdd"/><rect x="1" y="11.6" width="19.4" height="8.8" rx="4.4" fill="#e3dfdd"/><circle cx="15.8" cy="16" r="2.6" fill="#3c3b3c"/></svg>
<svg class="a" style="left:214px;top:1052px;" width="22" height="22" viewBox="0 0 22 22"><circle cx="11" cy="10.9" r="8.8" fill="none" stroke="#e3dfdd" stroke-width="1.4"/><rect x="8.6" y="5.8" width="4.8" height="10.2" rx="1" fill="none" stroke="#e3dfdd" stroke-width="1.2"/></svg>
<svg class="a" style="left:862px;top:1053px;" width="22" height="22" viewBox="0 0 22 22"><circle cx="9" cy="9" r="6.6" fill="none" stroke="#e9e5e3" stroke-width="1.6"/><line x1="13.8" y1="13.8" x2="18.2" y2="18.2" stroke="#e9e5e3" stroke-width="2" stroke-linecap="round"/><line x1="5.8" y1="9" x2="12.2" y2="9" stroke="#e9e5e3" stroke-width="2"/></svg>
<svg class="a" style="left:896.9px;top:1053px;" width="22" height="22" viewBox="0 0 22 22"><circle cx="9" cy="9" r="6.6" fill="none" stroke="#e9e5e3" stroke-width="1.6"/><line x1="13.8" y1="13.8" x2="18.2" y2="18.2" stroke="#e9e5e3" stroke-width="2" stroke-linecap="round"/><path d="M7.4 7 L9.6 5.6 L9.6 12.4" fill="none" stroke="#e9e5e3" stroke-width="1.7"/></svg>
<svg class="a" style="left:930.9px;top:1053px;" width="22" height="22" viewBox="0 0 22 22"><circle cx="9" cy="9" r="6.6" fill="none" stroke="#e9e5e3" stroke-width="1.6"/><line x1="13.8" y1="13.8" x2="18.2" y2="18.2" stroke="#e9e5e3" stroke-width="2" stroke-linecap="round"/><rect x="6.4" y="6.4" width="5.2" height="5.2" rx="1" fill="none" stroke="#e9e5e3" stroke-width="1.7"/></svg>
<svg class="a" style="left:964.9px;top:1053px;" width="22" height="22" viewBox="0 0 22 22"><circle cx="9" cy="9" r="6.6" fill="none" stroke="#e9e5e3" stroke-width="1.6"/><line x1="13.8" y1="13.8" x2="18.2" y2="18.2" stroke="#e9e5e3" stroke-width="2" stroke-linecap="round"/><line x1="5.8" y1="9" x2="12.2" y2="9" stroke="#e9e5e3" stroke-width="1.8"/><line x1="9" y1="5.8" x2="9" y2="12.2" stroke="#e9e5e3" stroke-width="1.8"/></svg></div>
<div id="statline" class="a"></div><div id="status" class="a"></div>
<svg class="a" style="left:-3px;top:1239px;" width="28" height="15" viewBox="0 0 28 15"><path d="M0 1.2 L20 1.2 Q21 1.2 21.8 2.2 L25.5 6.3 Q26 7 25.5 7.7 L21.8 11.8 Q21 12.8 20 12.8 L0 12.8 Z" fill="#1b86ff"/></svg>
<div class="a" style="left:1831.5px;top:1238.89px;font-family:'Liberation Sans';font-size:16.9px;line-height:16.9px;font-weight:400;color:#b3acaa;white-space:pre;-webkit-text-stroke:0.3px #b3acaa;">Line: 14  Col: 26</div>
<div class="a" style="left:1968.5px;top:1236px;width:1px;height:20px;background:#3d3533;border-radius:0px;"></div>
<svg class="a" style="left:1980px;top:1236px;" width="24" height="22" viewBox="0 0 24 22"><rect x="1.5" y="1.5" width="19" height="17" rx="3" fill="none" stroke="#bfb8b5" stroke-width="1.4"/><rect x="4" y="12.5" width="14" height="3.4" rx="1.2" fill="#bfb8b5"/></svg></body></html>
